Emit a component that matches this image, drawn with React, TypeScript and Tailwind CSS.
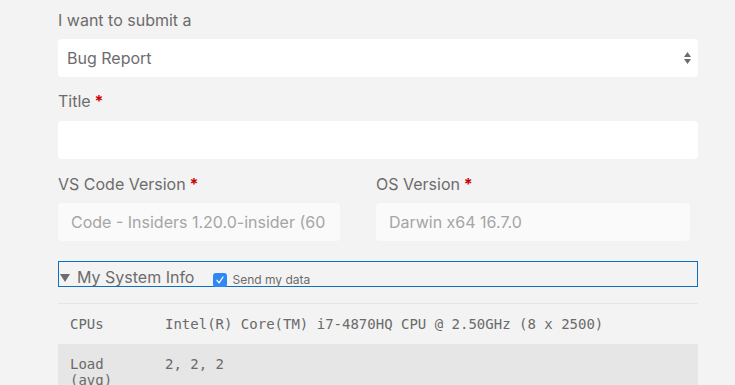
import React from "react";

const sans = { fontFamily: 'Inter, "Liberation Sans", Arial, sans-serif' };

function Req() {
  return <span className="text-[#cc0000] font-bold"> *</span>;
}

export default function App() {
  return (
    <div className="w-[735px] h-[385px] overflow-hidden bg-[#f3f3f3] text-[#6c6c6c]" style={sans}>
      <div className="ml-[58px] w-[640px] pt-[8px]">
        <div className="text-[16px] leading-[24px]">I want to submit a</div>
        <div className="mt-[7px] h-[38px] bg-white rounded-[4px] flex items-center justify-between pl-[9px] pr-[6px]">
          <span className="text-[16px]">Bug Report</span>
          <svg width="9" height="14" viewBox="0 0 9 14">
            <path d="M4.5 1 L8 6 L1 6 Z" fill="#6c6c6c" />
            <path d="M4.5 13 L8 8 L1 8 Z" fill="#6c6c6c" />
          </svg>
        </div>

        <div className="mt-[12px] text-[16px] leading-[24px]">
          Title<Req />
        </div>
        <div className="mt-[8px] h-[38px] bg-white rounded-[4px]" />

        <div className="mt-[13px] flex">
          <div className="w-[318px]">
            <div className="text-[16px] leading-[24px]">
              VS Code Version<Req />
            </div>
            <div className="mt-[7px] h-[38px] w-[282px] bg-[#fafafa] rounded-[4px] flex items-center pl-[13px] overflow-hidden whitespace-nowrap text-[16px] text-[#a5a5a5]">
              Code - Insiders 1.20.0-insider (60
            </div>
          </div>
          <div>
            <div className="text-[16px] leading-[24px]">
              OS Version<Req />
            </div>
            <div className="mt-[7px] h-[38px] w-[314px] bg-[#fafafa] rounded-[4px] flex items-center pl-[13px] text-[16px] text-[#a5a5a5]">
              Darwin x64 16.7.0
            </div>
          </div>
        </div>

        <div className="mt-[20px] h-[26px] border border-[#0e6fc0] flex items-start">
          <svg className="ml-[1px] mt-[12px]" width="10" height="8" viewBox="0 0 10 8">
            <path d="M0 0 L10 0 L5 8 Z" fill="#6c6c6c" />
          </svg>
          <span className="ml-[7px] mt-[5px] text-[16px] leading-[20px]">My System Info</span>
          <span className="ml-[19px] mt-[10px] flex items-center gap-[5px]">
            <span className="w-[14px] h-[14px] rounded-[3px] bg-[#2f87f6] flex items-center justify-center">
              <svg width="10" height="10" viewBox="0 0 10 10">
                <path d="M2 5.3 L4.1 7.8 L8 2" stroke="white" strokeWidth="1.3" fill="none" strokeLinecap="round" strokeLinejoin="round" />
              </svg>
            </span>
            <span className="text-[12px] leading-[16px]">Send my data</span>
          </span>
        </div>

        <table
          className="mt-[16px] w-full border-t border-[#e5e5e5] border-collapse text-[14px] leading-[16px] text-[#6a6a6a]"
          style={{ fontFamily: '"DejaVu Sans Mono", "Liberation Mono", monospace' }}
        >
          <tbody>
            <tr>
              <td className="w-[107px] pl-[12px] pr-[22px] py-[12px] align-top">CPUs</td>
              <td className="py-[12px] align-top">Intel(R) Core(TM) i7-4870HQ CPU @ 2.50GHz (8 x 2500)</td>
            </tr>
            <tr className="bg-[#e6e6e6]">
              <td className="w-[107px] pl-[12px] pr-[22px] py-[12px] align-top">Load (avg)</td>
              <td className="py-[12px] align-top">2, 2, 2</td>
            </tr>
          </tbody>
        </table>
      </div>
    </div>
  );
}
